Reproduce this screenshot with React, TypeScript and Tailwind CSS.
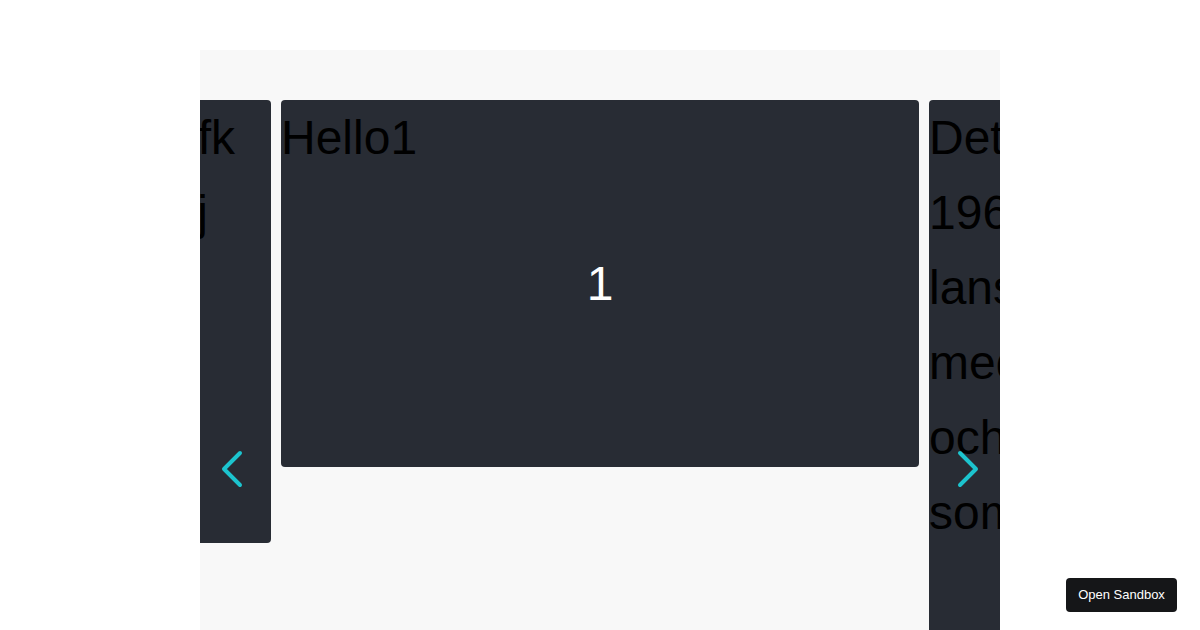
const font = { fontFamily: '"Liberation Sans", Arial, Helvetica, sans-serif' };

function Chevron({ dir }: { dir: 'left' | 'right' }) {
  return (
    <svg width="24" height="40" viewBox="0 0 24 40" fill="none">
      <path
        d={dir === 'left' ? 'M20 4 L4 20 L20 36' : 'M4 4 L20 20 L4 36'}
        stroke="#1cc4ce"
        strokeWidth={4}
        strokeLinecap="round"
        strokeLinejoin="round"
      />
    </svg>
  );
}

export default function App() {
  return (
    <div className="min-h-screen bg-white pt-[50px]" style={font}>
      {/* Carousel */}
      <div className="relative mx-auto h-[700px] w-[800px] overflow-hidden bg-[#f8f8f8]">
        <div className="-ml-[567px] flex items-start gap-[10px] pt-[50px] text-[48px] leading-[75px] text-black">
          {/* previous slide */}
          <div className="h-[443px] w-[638px] shrink-0 rounded bg-[#282c34]">
            <div className="whitespace-nowrap pr-[36px] text-right">Hello0 asdfk</div>
            <div className="whitespace-nowrap pr-[63px] text-right">asdlkfj</div>
          </div>

          {/* current slide */}
          <div className="grid h-[367px] w-[638px] shrink-0 rounded bg-[#282c34]">
            <div className="col-start-1 row-start-1">Hello1</div>
            <div className="col-start-1 row-start-1 flex items-center justify-center text-white">1</div>
          </div>

          {/* next slide */}
          <div className="h-[620px] w-[638px] shrink-0 rounded bg-[#282c34] whitespace-nowrap">
            <div>Det var en gång</div>
            <div>1960-talet</div>
            <div>lanserades</div>
            <div>med</div>
            <div>och</div>
            <div>som</div>
          </div>
        </div>

        <button className="absolute left-[20px] top-[399px] cursor-pointer">
          <Chevron dir="left" />
        </button>
        <button className="absolute right-[20px] top-[399px] cursor-pointer">
          <Chevron dir="right" />
        </button>
      </div>

      <button className="fixed bottom-[18px] right-[23px] h-[34px] w-[111px] rounded bg-[#151618] text-[13px] text-white">
        Open Sandbox
      </button>
    </div>
  );
}
